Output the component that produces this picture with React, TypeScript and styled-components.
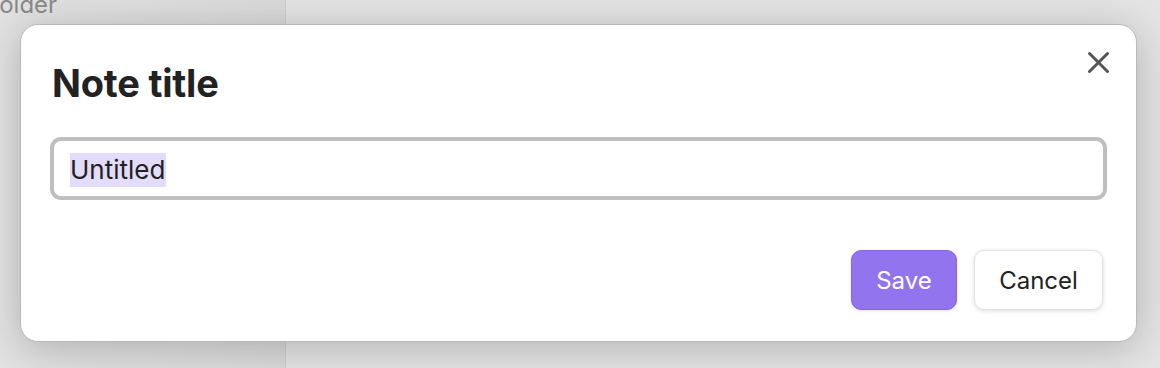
import React, { FC } from 'react';
import styled, { createGlobalStyle } from 'styled-components';

const GlobalStyle = createGlobalStyle`
  html, body {
    margin: 0;
    padding: 0;
    background: #e4e4e4;
    font-family: Inter, "Noto Sans", "Liberation Sans", sans-serif;
  }
`

const Screen = styled.div`
  position: relative;
  width: 1160px;
  height: 368px;
  overflow: hidden;
  display: flex;
  background: #e5e5e5;
`
const Sidebar = styled.div`
  width: 285px;
  flex: none;
  background: linear-gradient(90deg, #e2e2e2 0%, #dadada 100%);
  border-right: 1px solid #cdcdcd;
  overflow: hidden;
`
const FolderLabel = styled.div`
  margin: -10px 0 0 -14px;
  font-size: 24px;
  line-height: 30px;
  color: #8a8a8a;
  white-space: nowrap;
`
const Main = styled.div`
  flex: 1;
  background: #e4e4e4;
`

const Dialog = styled.div`
  position: absolute;
  left: 20px;
  top: 24px;
  width: 1117px;
  height: 318px;
  box-sizing: border-box;
  background: #ffffff;
  border: 1px solid #b8b8b8;
  border-radius: 18px;
  box-shadow: 0 6px 40px rgba(0, 0, 0, 0.22);
  padding: 36px 29px 0 29px;
  display: flex;
  flex-direction: column;
`
const Title = styled.h1`
  margin: 0 0 0 2px;
  font-size: 38px;
  line-height: 45px;
  font-weight: 700;
  color: #222222;
  letter-spacing: -0.2px;
`
const CloseButton = styled.button`
  position: absolute;
  top: 26px;
  right: 26px;
  width: 23px;
  height: 23px;
  padding: 0;
  border: 0;
  background: transparent;
  display: flex;
  align-items: center;
  justify-content: center;
  cursor: pointer;
`
const Field = styled.div`
  margin-top: 31px;
  height: 63px;
  box-sizing: border-box;
  border: 4px solid #bfbfbf;
  border-radius: 11px;
  padding: 2px 16px 0 16px;
  display: flex;
  align-items: center;
  font-size: 26px;
  color: #222222;
`
const Selected = styled.span`
  background: #e4dcfc;
  line-height: 34px;
  padding-right: 1px;
`
const Actions = styled.div`
  margin-top: 50px;
  padding-right: 4px;
  display: flex;
  justify-content: flex-end;
  gap: 17px;
`
const Button = styled.button<{ $primary?: boolean }>`
  height: 60px;
  padding: 0 24px;
  min-width: ${p => (p.$primary ? '106px' : '129px')};
  box-sizing: border-box;
  border-radius: 10px;
  font-family: inherit;
  font-size: 24px;
  cursor: pointer;
  background: ${p => (p.$primary ? '#9274ee' : '#ffffff')};
  color: ${p => (p.$primary ? '#ffffff' : '#222222')};
  border: 1px solid ${p => (p.$primary ? '#8668e0' : '#e2e2e2')};
  box-shadow: ${p => (p.$primary ? '0 1px 3px rgba(0,0,0,0.12)' : '0 1px 4px rgba(0,0,0,0.14)')};
`

export const NoteTitleDialog: FC = () => {
  return (
    <Dialog>
      <Title>Note title</Title>
      <CloseButton aria-label="Close">
        <svg width="23" height="23" viewBox="0 0 23 23" fill="none">
          <path d="M2.5 2.5 L20.5 20.5 M20.5 2.5 L2.5 20.5" stroke="#555555" strokeWidth="3" strokeLinecap="round" />
        </svg>
      </CloseButton>
      <Field>
        <Selected>Untitled</Selected>
      </Field>
      <Actions>
        <Button $primary>Save</Button>
        <Button>Cancel</Button>
      </Actions>
    </Dialog>
  );
};

export default function App() {
  return (
    <>
      <GlobalStyle />
      <Screen>
        <Sidebar>
          <FolderLabel>Folder</FolderLabel>
        </Sidebar>
        <Main />
        <NoteTitleDialog />
      </Screen>
    </>
  );
}
